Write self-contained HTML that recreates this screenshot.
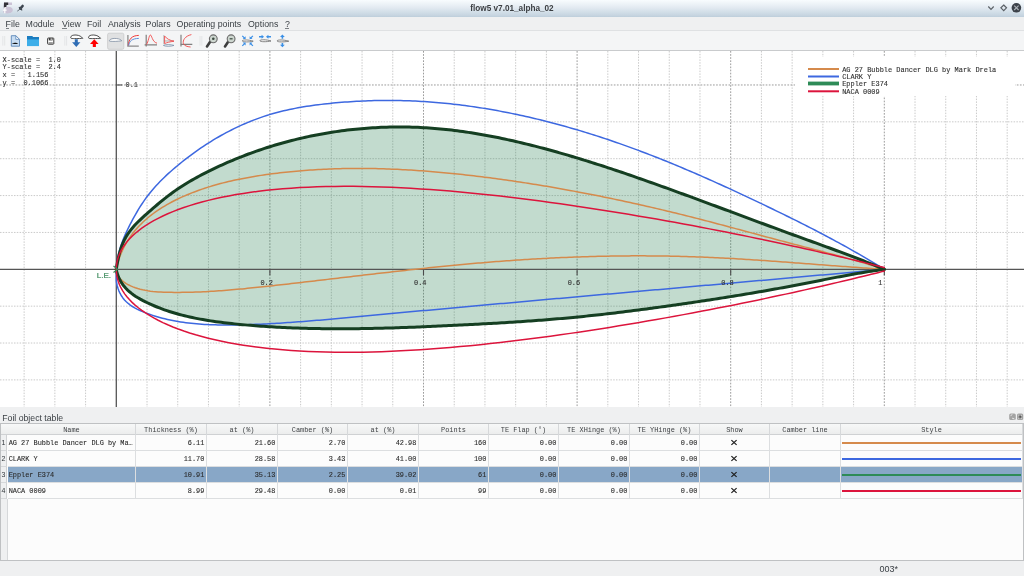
<!DOCTYPE html>
<html><head><meta charset="utf-8">
<style>
html,body{margin:0;padding:0;width:1024px;height:576px;overflow:hidden;background:#eff0f1;font-family:"Liberation Sans",sans-serif;}
.abs{position:absolute;}
#title{position:absolute;left:0;top:0;width:1024px;height:16.9px;z-index:1;background:linear-gradient(#f8fcfe 0%,#e4ebf2 42%,#d4e0e9 68%,#c7d5e1 90%,#bdcedb 100%);}
#title .t{position:absolute;left:0;width:1024px;top:3.8px;text-align:center;font:bold 8.2px "Liberation Sans",sans-serif;color:#3b3e42;letter-spacing:0;}
#menu{position:absolute;left:0;top:16px;width:1024px;height:14px;background:#eff0f1;}
#menu span{position:absolute;top:2.7px;font-size:8.8px;color:#3b4045;}
#tool{position:absolute;left:0;top:30px;width:1024px;height:20px;background:#f4f5f6;border-top:1px solid #dfe1e3;box-sizing:border-box;}
#plot{position:absolute;left:0;top:50px;width:1024px;height:357px;background:#fff;border-top:1px solid #c9cbcd;box-sizing:border-box;}
svg text.m{font-family:"Liberation Mono",monospace;font-size:6.95px;fill:#333;stroke:#333;stroke-width:0.12px;}
svg text.le{font-family:"Liberation Sans",sans-serif;font-size:8px;fill:#3f8c5e;stroke:#3f8c5e;stroke-width:0.2px;}
#dock{position:absolute;left:0;top:407px;overflow:visible;width:1024px;height:154px;background:#eff0f1;}
#dock .dt{position:absolute;left:2.3px;top:5.6px;font-size:8.7px;color:#3b4045;}
.tbl{position:absolute;left:0;top:423px;width:1024px;height:138px;background:#fcfcfc;border:1px solid #bfc1c3;box-sizing:border-box;overflow:hidden;}
.hdr{position:absolute;left:0;top:0;width:1024px;height:10px;background:linear-gradient(#f7f8f8,#eceded);border-bottom:1px solid #cfd1d3;}
.hc{position:absolute;top:0;height:11px;line-height:12.2px;text-align:center;font-family:"Liberation Mono",monospace;font-size:6.9px;color:#3c3f42;border-right:1px solid #d6d8da;box-sizing:border-box;}
.vh{position:absolute;left:0;width:6px;height:16px;line-height:16px;font-size:7px;text-align:center;color:#31363b;background:#eff0f1;border-right:1px solid #d0d2d4;border-bottom:1px solid #d6d8da;box-sizing:border-box;}
.vbody{position:absolute;left:0;top:75px;width:6.5px;height:70px;background:#eff0f1;border-right:1px solid #d6d8da;box-sizing:border-box;}
.row{position:absolute;left:6.5px;width:1017px;height:16px;}
.row.sel{background:#88a7c7;}
.c{position:absolute;top:0;height:16px;line-height:17.8px;font-family:"Liberation Mono",monospace;font-size:6.9px;color:#2a2a2a;-webkit-text-stroke:0.1px #2a2a2a;border-right:1px solid #dcdee0;border-bottom:1px solid #dcdee0;box-sizing:border-box;white-space:pre;overflow:hidden;}
.c.l{padding-left:1.2px;}
.c.r{text-align:right;padding-right:1.2px;}
.c.x{text-align:center;font-family:"Liberation Sans",sans-serif;font-size:8px;color:#111;}
.sl{position:absolute;left:1px;right:1px;top:7px;height:2px;}
#status{position:absolute;left:0;top:561px;width:1024px;height:15px;background:#eff0f1;}
#status span{position:absolute;left:879.5px;top:3.2px;font-size:9px;color:#3b4045;}
</style></head><body><div id="wrap" style="position:absolute;left:0;top:0;width:1024px;height:576px;will-change:transform">
<div id="title"><div class="t">flow5 v7.01_alpha_02</div></div>
<div id="menu">
<span style="left:5.6px">File</span>
<span style="left:25.6px">Module</span>
<span style="left:62px">View</span>
<span style="left:87px">Foil</span>
<span style="left:108px">Analysis</span>
<span style="left:145.6px">Polars</span>
<span style="left:176.6px">Operating points</span>
<span style="left:248px">Options</span>
<span style="left:285px">?</span>
<i style="position:absolute;left:5.8px;top:12.2px;width:3px;height:0.8px;background:#7a7e82"></i><i style="position:absolute;left:62.2px;top:12.2px;width:4.5px;height:0.8px;background:#7a7e82"></i><i style="position:absolute;left:284.8px;top:12.2px;width:4.4px;height:0.8px;background:#7a7e82"></i>
</div>
<div id="tool"></div>
<div id="plot"></div>
<svg class="abs" style="left:0;top:0;z-index:2" width="1024" height="50" viewBox="0 0 1024 50">
<!-- title logo -->
<path d="M4,2.6 H12 V4.9 H6.6 L6.3,6.9 C10.6,6.2 12.8,8 12.8,10.1 C12.8,12.5 10.4,13.4 7.6,13.4 C6,13.4 4.4,13.1 3.2,12.5 L3.7,7.2 Z" fill="#cbc3d6"/>
<path d="M4,2.6 H8.2 V4.9 H6.6 L6.3,6.9 L3.8,7.4 Z" fill="#333238"/>
<path d="M4.2,8 C4.2,7.2 5.2,7 6.2,7.2 V8.2 C5.6,8.1 5.4,8.3 5.4,8.8 V13.2 H4.2 Z M2.8,9.6 H6.6 V10.7 H2.8 Z" fill="#ffffff"/>
<!-- pin -->
<path d="M20.3,8.6 L22.6,6" stroke="#3d4650" stroke-width="2.6" stroke-linecap="round"/>
<path d="M19.2,7.4 L21.8,10" stroke="#3d4650" stroke-width="1.1" stroke-linecap="round"/>
<path d="M20.2,9 L17.6,10.9" stroke="#5a636c" stroke-width="0.9" stroke-linecap="round"/>
<!-- window buttons -->
<path d="M988.3,6.5 L991,9.3 L993.7,6.5" fill="none" stroke="#5b6167" stroke-width="1.2"/>
<path d="M1003.7,5 L1006.5,7.8 L1003.7,10.6 L1000.9,7.8 Z" fill="none" stroke="#5b6167" stroke-width="1.2"/>
<circle cx="1016.4" cy="7.8" r="4.8" fill="#3c424a"/>
<path d="M1014.2,5.6 L1018.6,10 M1018.6,5.6 L1014.2,10" stroke="#aeb4ba" stroke-width="1.1"/>
<!-- grips -->
<g fill="#e2e3e4">
<rect x="2.4" y="36" width="0.9" height="9.6"/><rect x="4.3" y="36" width="0.9" height="9.6"/>
<rect x="64.4" y="36" width="0.9" height="9.6"/><rect x="66.2" y="36" width="0.9" height="9.6"/>
<rect x="199.6" y="36" width="0.9" height="9.6"/><rect x="201.4" y="36" width="0.9" height="9.6"/>
</g>
<!-- new doc -->
<path d="M11.3,35.7 H15.8 L19.5,39.4 V46.2 H11.3 Z" fill="#c8ddf2" stroke="#5b87b9" stroke-width="0.9"/>
<path d="M15.8,35.7 V39.4 H19.5 Z" fill="#fff" stroke="#5b87b9" stroke-width="0.8"/>
<path d="M11.8,43.6 C13.5,42.2 16.8,42.6 18.3,43.4 C16.6,44.1 13.5,44.4 11.8,43.6Z" fill="#111"/>
<!-- folder -->
<path d="M27,35.9 H32.2 L33.2,36.9 H39 V40 H27 Z" fill="#1b7cc0"/>
<rect x="27" y="39.4" width="12" height="6.7" fill="#3daee9"/>
<!-- save -->
<rect x="47.6" y="38" width="6.2" height="6.2" rx="0.7" fill="#fff" stroke="#3a3a3a" stroke-width="1"/>
<rect x="48.8" y="38" width="3.8" height="2.4" fill="#3a3a3a"/>
<rect x="50.6" y="38.4" width="1.1" height="1.5" fill="#fff"/>
<rect x="48.6" y="42.2" width="4.2" height="1.6" fill="#8a8a8a"/>
<!-- load foil down -->
<path d="M70.7,37.6 C70.7,35.6 73,34.9 76,35 C79.5,35.2 81.5,36.8 82.8,38.3 C79,38.6 73,38.7 71.3,38.4 C70.8,38.2 70.7,37.9 70.7,37.6 Z" fill="#fff" stroke="#3a3a3a" stroke-width="0.9"/>
<path d="M74.8,39.2 H77.8 V42.3 H80.4 L76.3,47.1 L72.1,42.3 H74.8 Z" fill="#2f6db5"/>
<!-- foil up -->
<path d="M88.5,37.6 C88.5,35.6 90.8,34.9 93.8,35 C97.3,35.2 99.3,36.8 100.6,38.3 C96.8,38.6 90.8,38.7 89.1,38.4 C88.6,38.2 88.5,37.9 88.5,37.6 Z" fill="#fff" stroke="#3a3a3a" stroke-width="0.9"/>
<path d="M94.3,39.2 L98.6,44 H95.9 V47.1 H92.8 V44 H90 Z" fill="#ff0000"/>
<!-- active -->
<rect x="107.6" y="33.2" width="16.2" height="16.1" rx="1.5" fill="#e0e1e2" stroke="#c9cacb" stroke-width="0.8"/>
<path d="M109.4,40.6 C109.8,38.8 113.5,38.2 116.5,38.5 C119,38.8 121,39.6 121.8,40.8 C118,41.4 112.5,41.7 109.6,41.2 Z" fill="#fafafa" stroke="#71839a" stroke-width="0.7"/>
<!-- polar 1 -->
<path d="M127.9,34.9 V46.2 H138.8" fill="none" stroke="#8a8a8a" stroke-width="1.3"/>
<path d="M128.3,45.6 C129,39 131.5,35.6 138.8,35.4" fill="none" stroke="#f03a3a" stroke-width="1"/>
<path d="M128.6,45.6 C129.6,40.8 132,38.6 138.8,38.4" fill="none" stroke="#5e8fd8" stroke-width="1"/>
<!-- polar 2 -->
<path d="M146.2,34.8 V46.6 M144.6,44.8 H157" fill="none" stroke="#808080" stroke-width="1.2"/>
<path d="M146.4,44.6 C148.4,42 149,35 150.4,35 C151.8,35 152.2,42 157,43.2" fill="none" stroke="#f04848" stroke-width="0.9"/>
<!-- polar 3 -->
<path d="M163.9,35 V44" fill="none" stroke="#b0b0b0" stroke-width="1"/>
<rect x="163" y="40.2" width="11" height="1.5" fill="#c8c8c8"/>
<path d="M164.6,36 C166.4,38.6 170,40.6 174,41.2 C170,41.8 166.5,42.6 164.6,43.6 Z" fill="none" stroke="#f05050" stroke-width="0.9"/>
<path d="M163.4,45.4 C165,44.2 171,44.4 174,45.4 C171,46.6 165,46.6 163.4,45.4Z" fill="none" stroke="#7a90aa" stroke-width="0.8"/>
<!-- polar 4 -->
<path d="M181,34.8 V46.6 M180.3,44.4 H192.3" fill="none" stroke="#808080" stroke-width="1.2"/>
<path d="M191.4,34.6 C185,36 182.5,40.5 183.4,43.5 C184.2,45.6 187,46.8 190.6,47" fill="none" stroke="#f04848" stroke-width="0.9"/>
<!-- zoom in -->
<path d="M210,42 L207,46.4" stroke="#3e3e3e" stroke-width="2.6" stroke-linecap="round"/>
<circle cx="213.3" cy="38.8" r="3.9" fill="#cdd6cf" stroke="#6a6a6a" stroke-width="1.1"/>
<circle cx="213.3" cy="38.8" r="1.3" fill="#3a4a40"/>
<!-- zoom out -->
<path d="M228,42 L225,46.4" stroke="#3e3e3e" stroke-width="2.6" stroke-linecap="round"/>
<circle cx="231.1" cy="38.8" r="3.9" fill="#cdd6cf" stroke="#6a6a6a" stroke-width="1.1"/>
<rect x="229.6" y="38.2" width="3" height="1.2" fill="#3a4a40"/>
<!-- fit -->
<path d="M242.2,40.9 C242.4,39.6 249,39.6 253.2,41.2 C249,42.2 242.8,42.2 242.2,40.9Z" fill="#fafafa" stroke="#6a6a6a" stroke-width="0.8"/>
<g stroke="#3a8fe6" stroke-width="1.2" fill="none"><path d="M242.3,35.8 L244.6,38.1"/><path d="M252.9,35.8 L250.6,38.1"/><path d="M242.3,45.9 L244.6,43.6"/><path d="M252.9,45.9 L250.6,43.6"/></g>
<g fill="#3a8fe6"><path d="M245.6,39.1 L245.6,36.2 L242.7,39.1Z"/><path d="M249.6,39.1 L249.6,36.2 L252.5,39.1Z"/><path d="M245.6,42.6 L245.6,45.5 L242.7,42.6Z"/><path d="M249.6,42.6 L249.6,45.5 L252.5,42.6Z"/></g>
<!-- x zoom -->
<path d="M259.8,40.7 C260,39.4 266.6,39.4 271,41 C266.6,42 260.4,42 259.8,40.7Z" fill="#fafafa" stroke="#6a6a6a" stroke-width="0.8"/>
<g fill="#3a8fe6"><path d="M259,36.1 H261.6 V34.8 L264,36.8 L261.6,38.8 V37.5 H259Z"/><path d="M271,36.1 H268.4 V34.8 L266,36.8 L268.4,38.8 V37.5 H271Z"/></g>
<!-- y zoom -->
<path d="M277,40.9 C277.2,39.6 283.8,39.6 288.8,41.2 C283.8,42.2 277.6,42.2 277,40.9Z" fill="#fafafa" stroke="#6a6a6a" stroke-width="0.8"/>
<g fill="#3a8fe6"><path d="M282.4,34.6 L284.8,37 H283.2 V38.8 H281.6 V37 H280Z"/><path d="M282.4,47.2 L284.8,44.8 H283.2 V43 H281.6 V44.8 H280Z"/></g>
</svg>

<svg class="abs" style="left:0;top:0" width="1024" height="576" viewBox="0 0 1024 576">
<defs><clipPath id="pc"><rect x="0" y="51" width="1024" height="356"/></clipPath></defs>
<g clip-path="url(#pc)">
<line x1="24.14" y1="51" x2="24.14" y2="407" stroke="#cacaca" stroke-width="1" stroke-dasharray="1.5,1.3"/>
<line x1="54.86" y1="51" x2="54.86" y2="407" stroke="#cacaca" stroke-width="1" stroke-dasharray="1.5,1.3"/>
<line x1="85.58" y1="51" x2="85.58" y2="407" stroke="#cacaca" stroke-width="1" stroke-dasharray="1.5,1.3"/>
<line x1="147.02" y1="51" x2="147.02" y2="407" stroke="#cacaca" stroke-width="1" stroke-dasharray="1.5,1.3"/>
<line x1="177.74" y1="51" x2="177.74" y2="407" stroke="#cacaca" stroke-width="1" stroke-dasharray="1.5,1.3"/>
<line x1="208.46" y1="51" x2="208.46" y2="407" stroke="#cacaca" stroke-width="1" stroke-dasharray="1.5,1.3"/>
<line x1="239.18" y1="51" x2="239.18" y2="407" stroke="#cacaca" stroke-width="1" stroke-dasharray="1.5,1.3"/>
<line x1="269.90" y1="51" x2="269.90" y2="407" stroke="#9c9c9c" stroke-width="1" stroke-dasharray="1.7,1.4"/>
<line x1="300.62" y1="51" x2="300.62" y2="407" stroke="#cacaca" stroke-width="1" stroke-dasharray="1.5,1.3"/>
<line x1="331.34" y1="51" x2="331.34" y2="407" stroke="#cacaca" stroke-width="1" stroke-dasharray="1.5,1.3"/>
<line x1="362.06" y1="51" x2="362.06" y2="407" stroke="#cacaca" stroke-width="1" stroke-dasharray="1.5,1.3"/>
<line x1="392.78" y1="51" x2="392.78" y2="407" stroke="#cacaca" stroke-width="1" stroke-dasharray="1.5,1.3"/>
<line x1="423.50" y1="51" x2="423.50" y2="407" stroke="#9c9c9c" stroke-width="1" stroke-dasharray="1.7,1.4"/>
<line x1="454.22" y1="51" x2="454.22" y2="407" stroke="#cacaca" stroke-width="1" stroke-dasharray="1.5,1.3"/>
<line x1="484.94" y1="51" x2="484.94" y2="407" stroke="#cacaca" stroke-width="1" stroke-dasharray="1.5,1.3"/>
<line x1="515.66" y1="51" x2="515.66" y2="407" stroke="#cacaca" stroke-width="1" stroke-dasharray="1.5,1.3"/>
<line x1="546.38" y1="51" x2="546.38" y2="407" stroke="#cacaca" stroke-width="1" stroke-dasharray="1.5,1.3"/>
<line x1="577.10" y1="51" x2="577.10" y2="407" stroke="#9c9c9c" stroke-width="1" stroke-dasharray="1.7,1.4"/>
<line x1="607.82" y1="51" x2="607.82" y2="407" stroke="#cacaca" stroke-width="1" stroke-dasharray="1.5,1.3"/>
<line x1="638.54" y1="51" x2="638.54" y2="407" stroke="#cacaca" stroke-width="1" stroke-dasharray="1.5,1.3"/>
<line x1="669.26" y1="51" x2="669.26" y2="407" stroke="#cacaca" stroke-width="1" stroke-dasharray="1.5,1.3"/>
<line x1="699.98" y1="51" x2="699.98" y2="407" stroke="#cacaca" stroke-width="1" stroke-dasharray="1.5,1.3"/>
<line x1="730.70" y1="51" x2="730.70" y2="407" stroke="#9c9c9c" stroke-width="1" stroke-dasharray="1.7,1.4"/>
<line x1="761.42" y1="51" x2="761.42" y2="407" stroke="#cacaca" stroke-width="1" stroke-dasharray="1.5,1.3"/>
<line x1="792.14" y1="51" x2="792.14" y2="407" stroke="#cacaca" stroke-width="1" stroke-dasharray="1.5,1.3"/>
<line x1="822.86" y1="51" x2="822.86" y2="407" stroke="#cacaca" stroke-width="1" stroke-dasharray="1.5,1.3"/>
<line x1="853.58" y1="51" x2="853.58" y2="407" stroke="#cacaca" stroke-width="1" stroke-dasharray="1.5,1.3"/>
<line x1="884.30" y1="51" x2="884.30" y2="407" stroke="#9c9c9c" stroke-width="1" stroke-dasharray="1.7,1.4"/>
<line x1="915.02" y1="51" x2="915.02" y2="407" stroke="#cacaca" stroke-width="1" stroke-dasharray="1.5,1.3"/>
<line x1="945.74" y1="51" x2="945.74" y2="407" stroke="#cacaca" stroke-width="1" stroke-dasharray="1.5,1.3"/>
<line x1="976.46" y1="51" x2="976.46" y2="407" stroke="#cacaca" stroke-width="1" stroke-dasharray="1.5,1.3"/>
<line x1="1007.18" y1="51" x2="1007.18" y2="407" stroke="#cacaca" stroke-width="1" stroke-dasharray="1.5,1.3"/>
<line x1="0" y1="379.89" x2="1024" y2="379.89" stroke="#cacaca" stroke-width="1" stroke-dasharray="1.5,1.3"/>
<line x1="0" y1="343.03" x2="1024" y2="343.03" stroke="#cacaca" stroke-width="1" stroke-dasharray="1.5,1.3"/>
<line x1="0" y1="306.16" x2="1024" y2="306.16" stroke="#cacaca" stroke-width="1" stroke-dasharray="1.5,1.3"/>
<line x1="0" y1="232.44" x2="1024" y2="232.44" stroke="#cacaca" stroke-width="1" stroke-dasharray="1.5,1.3"/>
<line x1="0" y1="195.57" x2="1024" y2="195.57" stroke="#cacaca" stroke-width="1" stroke-dasharray="1.5,1.3"/>
<line x1="0" y1="158.71" x2="1024" y2="158.71" stroke="#cacaca" stroke-width="1" stroke-dasharray="1.5,1.3"/>
<line x1="0" y1="121.84" x2="1024" y2="121.84" stroke="#cacaca" stroke-width="1" stroke-dasharray="1.5,1.3"/>
<line x1="0" y1="84.98" x2="1024" y2="84.98" stroke="#9c9c9c" stroke-width="1" stroke-dasharray="1.7,1.4"/>
<path d="M116.30,269.30 L116.73,266.50 L117.21,263.68 L117.74,260.86 L118.33,258.04 L118.98,255.23 L119.71,252.45 L120.52,249.70 L121.42,246.99 L122.41,244.33 L123.52,241.73 L124.74,239.20 L126.08,236.75 L127.54,234.37 L129.12,232.08 L130.81,229.85 L132.59,227.69 L134.45,225.59 L136.38,223.53 L138.38,221.52 L140.42,219.55 L142.50,217.61 L144.61,215.69 L146.73,213.79 L148.87,211.91 L151.00,210.03 L153.15,208.17 L155.30,206.32 L157.46,204.49 L159.64,202.68 L161.82,200.88 L164.02,199.11 L166.24,197.37 L168.47,195.65 L170.73,193.95 L173.00,192.29 L175.29,190.65 L177.61,189.05 L179.95,187.48 L182.31,185.94 L184.69,184.44 L187.10,182.96 L189.53,181.52 L191.97,180.10 L194.43,178.70 L196.91,177.34 L199.40,175.99 L201.91,174.67 L204.42,173.37 L206.95,172.09 L209.48,170.83 L212.03,169.59 L214.58,168.36 L217.14,167.15 L219.71,165.96 L222.29,164.79 L224.87,163.63 L227.47,162.49 L230.07,161.37 L232.67,160.27 L235.29,159.18 L237.91,158.12 L240.54,157.07 L243.17,156.04 L245.82,155.02 L248.47,154.03 L251.12,153.05 L253.78,152.09 L256.45,151.14 L259.13,150.22 L261.81,149.31 L264.50,148.42 L267.19,147.55 L269.89,146.70 L272.59,145.86 L275.30,145.05 L278.02,144.25 L280.74,143.46 L283.46,142.70 L286.19,141.96 L288.93,141.23 L291.66,140.52 L294.41,139.83 L297.16,139.15 L299.91,138.50 L302.67,137.86 L305.43,137.24 L308.19,136.64 L310.96,136.05 L313.74,135.49 L316.51,134.94 L319.29,134.41 L322.08,133.90 L324.86,133.41 L327.65,132.93 L330.44,132.47 L333.24,132.03 L336.04,131.61 L338.84,131.21 L341.64,130.83 L344.45,130.46 L347.26,130.11 L350.07,129.78 L352.88,129.47 L355.69,129.18 L358.51,128.90 L361.33,128.65 L364.14,128.41 L366.97,128.19 L369.79,127.99 L372.61,127.80 L375.43,127.64 L378.26,127.49 L381.08,127.36 L383.91,127.25 L386.74,127.16 L389.56,127.09 L392.39,127.03 L395.22,126.99 L398.05,126.98 L400.87,126.98 L403.70,127.00 L406.53,127.03 L409.35,127.09 L412.18,127.16 L415.00,127.25 L417.83,127.36 L420.65,127.49 L423.47,127.64 L426.29,127.81 L429.11,127.99 L431.93,128.20 L434.75,128.42 L437.57,128.65 L440.38,128.91 L443.19,129.18 L446.01,129.47 L448.82,129.78 L451.62,130.10 L454.43,130.44 L457.24,130.79 L460.04,131.16 L462.84,131.55 L465.64,131.95 L468.44,132.36 L471.24,132.79 L474.03,133.24 L476.83,133.69 L479.62,134.17 L482.41,134.65 L485.20,135.15 L487.98,135.66 L490.77,136.19 L493.55,136.73 L496.33,137.28 L499.10,137.84 L501.88,138.42 L504.65,139.00 L507.42,139.60 L510.19,140.21 L512.96,140.83 L515.72,141.46 L518.48,142.10 L521.24,142.75 L524.00,143.42 L526.75,144.09 L529.50,144.77 L532.25,145.46 L535.00,146.16 L537.74,146.87 L540.48,147.58 L543.22,148.31 L545.96,149.04 L548.69,149.78 L551.42,150.53 L554.15,151.29 L556.87,152.05 L559.60,152.82 L562.32,153.60 L565.03,154.39 L567.75,155.18 L570.46,155.98 L573.17,156.78 L575.88,157.60 L578.58,158.42 L581.29,159.24 L583.99,160.07 L586.69,160.91 L589.39,161.75 L592.08,162.60 L594.77,163.46 L597.47,164.32 L600.16,165.18 L602.84,166.05 L605.53,166.93 L608.21,167.81 L610.90,168.69 L613.58,169.59 L616.26,170.48 L618.94,171.38 L621.61,172.29 L624.29,173.19 L626.96,174.11 L629.63,175.02 L632.31,175.94 L634.98,176.87 L637.65,177.80 L640.31,178.73 L642.98,179.66 L645.65,180.60 L648.31,181.54 L650.98,182.49 L653.64,183.44 L656.30,184.39 L658.96,185.34 L661.63,186.29 L664.29,187.25 L666.95,188.21 L669.61,189.17 L672.27,190.14 L674.92,191.10 L677.58,192.07 L680.24,193.04 L682.90,194.01 L685.55,194.99 L688.21,195.96 L690.87,196.94 L693.52,197.91 L696.18,198.89 L698.83,199.87 L701.49,200.85 L704.14,201.83 L706.80,202.82 L709.45,203.80 L712.11,204.79 L714.76,205.77 L717.41,206.76 L720.07,207.74 L722.72,208.73 L725.38,209.72 L728.03,210.70 L730.68,211.69 L733.34,212.68 L735.99,213.67 L738.64,214.65 L741.30,215.64 L743.95,216.63 L746.60,217.62 L749.26,218.60 L751.91,219.59 L754.56,220.57 L757.22,221.56 L759.87,222.54 L762.52,223.53 L765.18,224.51 L767.83,225.49 L770.49,226.47 L773.14,227.45 L775.80,228.43 L778.45,229.41 L781.11,230.38 L783.77,231.35 L786.42,232.33 L789.08,233.30 L791.74,234.27 L794.39,235.23 L797.05,236.20 L799.71,237.16 L802.37,238.13 L805.03,239.09 L807.69,240.05 L810.34,241.02 L813.00,241.98 L815.66,242.94 L818.32,243.91 L820.97,244.87 L823.63,245.84 L826.29,246.81 L828.94,247.78 L831.59,248.76 L834.24,249.73 L836.90,250.72 L839.55,251.70 L842.19,252.69 L844.84,253.68 L847.49,254.68 L850.13,255.68 L852.77,256.69 L855.41,257.70 L858.05,258.72 L860.69,259.74 L863.32,260.77 L865.95,261.81 L868.58,262.86 L871.21,263.91 L873.83,264.97 L876.45,266.04 L879.07,267.12 L881.69,268.20 L884.30,269.30 L884.30,269.30 L881.67,269.66 L879.05,270.04 L876.42,270.42 L873.80,270.82 L871.18,271.22 L868.56,271.63 L865.95,272.06 L863.34,272.49 L860.72,272.92 L858.11,273.37 L855.50,273.82 L852.90,274.28 L850.29,274.75 L847.69,275.22 L845.08,275.69 L842.48,276.18 L839.88,276.66 L837.28,277.15 L834.68,277.65 L832.08,278.14 L829.48,278.64 L826.89,279.14 L824.29,279.65 L821.69,280.16 L819.09,280.66 L816.50,281.17 L813.90,281.68 L811.30,282.19 L808.71,282.69 L806.11,283.20 L803.51,283.71 L800.91,284.21 L798.32,284.71 L795.72,285.21 L793.12,285.71 L790.52,286.20 L787.91,286.69 L785.31,287.18 L782.71,287.66 L780.10,288.14 L777.50,288.61 L774.89,289.08 L772.29,289.55 L769.68,290.02 L767.07,290.48 L764.46,290.94 L761.85,291.40 L759.24,291.85 L756.63,292.30 L754.02,292.75 L751.41,293.19 L748.79,293.63 L746.18,294.07 L743.57,294.50 L740.95,294.93 L738.34,295.36 L735.72,295.79 L733.11,296.21 L730.49,296.64 L727.87,297.05 L725.26,297.47 L722.64,297.88 L720.02,298.29 L717.40,298.70 L714.78,299.11 L712.17,299.51 L709.55,299.91 L706.93,300.31 L704.31,300.70 L701.69,301.10 L699.07,301.49 L696.45,301.88 L693.83,302.27 L691.21,302.65 L688.58,303.03 L685.96,303.41 L683.34,303.79 L680.72,304.17 L678.10,304.55 L675.48,304.92 L672.86,305.29 L670.23,305.66 L667.61,306.03 L664.99,306.39 L662.37,306.76 L659.75,307.12 L657.13,307.48 L654.50,307.83 L651.88,308.19 L649.26,308.54 L646.64,308.89 L644.02,309.24 L641.39,309.59 L638.77,309.93 L636.15,310.27 L633.52,310.61 L630.90,310.94 L628.28,311.27 L625.65,311.60 L623.03,311.93 L620.40,312.25 L617.78,312.57 L615.15,312.89 L612.53,313.20 L609.90,313.51 L607.27,313.81 L604.64,314.12 L602.02,314.41 L599.39,314.71 L596.76,315.00 L594.13,315.29 L591.50,315.57 L588.87,315.85 L586.23,316.12 L583.60,316.39 L580.97,316.66 L578.33,316.92 L575.70,317.17 L573.06,317.43 L570.43,317.67 L567.79,317.92 L565.15,318.16 L562.51,318.39 L559.88,318.62 L557.24,318.85 L554.60,319.07 L551.95,319.29 L549.31,319.51 L546.67,319.72 L544.03,319.92 L541.39,320.13 L538.74,320.33 L536.10,320.53 L533.46,320.72 L530.81,320.91 L528.17,321.10 L525.52,321.28 L522.88,321.46 L520.23,321.64 L517.58,321.82 L514.94,321.99 L512.29,322.16 L509.64,322.33 L507.00,322.49 L504.35,322.65 L501.70,322.81 L499.06,322.97 L496.41,323.13 L493.76,323.28 L491.11,323.43 L488.46,323.58 L485.82,323.72 L483.17,323.87 L480.52,324.01 L477.87,324.15 L475.23,324.29 L472.58,324.43 L469.93,324.57 L467.28,324.70 L464.64,324.84 L461.99,324.97 L459.34,325.10 L456.70,325.23 L454.05,325.36 L451.41,325.49 L448.76,325.62 L446.12,325.74 L443.47,325.87 L440.83,325.99 L438.18,326.11 L435.54,326.23 L432.89,326.35 L430.25,326.47 L427.61,326.58 L424.96,326.70 L422.32,326.81 L419.68,326.92 L417.03,327.03 L414.39,327.13 L411.75,327.23 L409.10,327.33 L406.46,327.43 L403.82,327.53 L401.18,327.62 L398.53,327.71 L395.89,327.79 L393.25,327.88 L390.61,327.96 L387.97,328.03 L385.32,328.11 L382.68,328.18 L380.04,328.25 L377.40,328.31 L374.76,328.37 L372.12,328.43 L369.47,328.48 L366.83,328.53 L364.19,328.57 L361.55,328.61 L358.91,328.65 L356.26,328.68 L353.62,328.70 L350.98,328.73 L348.34,328.75 L345.69,328.76 L343.05,328.77 L340.41,328.77 L337.77,328.77 L335.12,328.76 L332.48,328.75 L329.84,328.74 L327.19,328.71 L324.55,328.69 L321.90,328.65 L319.26,328.62 L316.62,328.57 L313.97,328.52 L311.33,328.47 L308.68,328.40 L306.04,328.34 L303.39,328.26 L300.75,328.18 L298.10,328.09 L295.45,328.00 L292.81,327.90 L290.16,327.79 L287.51,327.68 L284.86,327.56 L282.22,327.44 L279.57,327.30 L276.92,327.16 L274.27,327.01 L271.62,326.86 L268.97,326.69 L266.32,326.52 L263.67,326.35 L261.02,326.16 L258.37,325.97 L255.72,325.77 L253.06,325.56 L250.41,325.34 L247.76,325.12 L245.10,324.88 L242.45,324.64 L239.79,324.39 L237.14,324.13 L234.48,323.87 L231.83,323.59 L229.17,323.30 L226.52,323.00 L223.87,322.68 L221.22,322.35 L218.58,322.01 L215.93,321.65 L213.29,321.27 L210.66,320.88 L208.03,320.47 L205.40,320.04 L202.78,319.59 L200.16,319.12 L197.55,318.62 L194.95,318.10 L192.35,317.56 L189.77,317.00 L187.18,316.41 L184.61,315.79 L182.05,315.15 L179.49,314.47 L176.95,313.77 L174.42,313.04 L171.89,312.28 L169.38,311.48 L166.88,310.66 L164.39,309.79 L161.91,308.90 L159.44,307.97 L156.99,307.00 L154.56,306.00 L152.13,304.96 L149.72,303.87 L147.33,302.75 L144.95,301.59 L142.59,300.38 L140.27,299.12 L137.99,297.80 L135.77,296.41 L133.61,294.95 L131.52,293.41 L129.52,291.79 L127.61,290.07 L125.80,288.25 L124.11,286.32 L122.54,284.28 L121.11,282.13 L119.82,279.84 L118.68,277.42 L117.71,274.86 L116.91,272.16 L116.30,269.30 Z" fill="rgb(40,128,80)" fill-opacity="0.284" stroke="none"/>
<line x1="0" y1="269.30" x2="1024" y2="269.30" stroke="#555" stroke-width="1.3"/>
<line x1="116.30" y1="51" x2="116.30" y2="407" stroke="#555" stroke-width="1.3"/>
<line x1="269.90" y1="269.30" x2="269.90" y2="275.30" stroke="#4a4a4a" stroke-width="1.1"/>
<line x1="423.50" y1="269.30" x2="423.50" y2="275.30" stroke="#4a4a4a" stroke-width="1.1"/>
<line x1="577.10" y1="269.30" x2="577.10" y2="275.30" stroke="#4a4a4a" stroke-width="1.1"/>
<line x1="730.70" y1="269.30" x2="730.70" y2="275.30" stroke="#4a4a4a" stroke-width="1.1"/>
<line x1="884.30" y1="269.30" x2="884.30" y2="275.30" stroke="#4a4a4a" stroke-width="1.1"/>
<line x1="116.30" y1="84.98" x2="122.30" y2="84.98" stroke="#4a4a4a" stroke-width="1.1"/>
<text x="125.5" y="87.48" class="m">0.1</text>
<path d="M116.30,269.30 L116.95,266.38 L117.69,263.53 L118.50,260.74 L119.40,258.01 L120.37,255.34 L121.42,252.74 L122.55,250.19 L123.74,247.70 L125.01,245.26 L126.34,242.89 L127.75,240.57 L129.21,238.30 L130.74,236.09 L132.33,233.93 L133.98,231.83 L135.69,229.77 L137.45,227.77 L139.27,225.82 L141.14,223.92 L143.06,222.06 L145.02,220.26 L147.04,218.50 L149.10,216.78 L151.20,215.12 L153.35,213.49 L155.53,211.91 L157.75,210.38 L160.01,208.88 L162.30,207.43 L164.62,206.02 L166.97,204.64 L169.36,203.31 L171.76,202.01 L174.20,200.75 L176.66,199.53 L179.13,198.34 L181.63,197.19 L184.15,196.07 L186.68,194.99 L189.22,193.94 L191.78,192.92 L194.35,191.93 L196.92,190.97 L199.51,190.03 L202.11,189.13 L204.72,188.26 L207.33,187.41 L209.95,186.60 L212.59,185.80 L215.22,185.04 L217.87,184.30 L220.52,183.58 L223.18,182.89 L225.85,182.22 L228.52,181.58 L231.20,180.95 L233.89,180.35 L236.58,179.77 L239.27,179.21 L241.97,178.67 L244.67,178.15 L247.37,177.64 L250.08,177.16 L252.80,176.69 L255.51,176.24 L258.23,175.80 L260.95,175.38 L263.67,174.98 L266.39,174.59 L269.11,174.21 L271.84,173.85 L274.56,173.50 L277.28,173.16 L280.01,172.84 L282.73,172.52 L285.46,172.22 L288.19,171.93 L290.91,171.66 L293.64,171.39 L296.37,171.14 L299.09,170.90 L301.82,170.67 L304.55,170.46 L307.28,170.25 L310.01,170.06 L312.74,169.88 L315.47,169.71 L318.20,169.55 L320.93,169.40 L323.66,169.26 L326.39,169.13 L329.12,169.02 L331.85,168.91 L334.58,168.82 L337.31,168.74 L340.04,168.66 L342.77,168.60 L345.51,168.55 L348.24,168.51 L350.97,168.47 L353.70,168.45 L356.43,168.44 L359.17,168.44 L361.90,168.44 L364.63,168.46 L367.36,168.48 L370.09,168.52 L372.82,168.56 L375.56,168.62 L378.29,168.68 L381.02,168.75 L383.75,168.83 L386.48,168.92 L389.21,169.02 L391.95,169.13 L394.68,169.24 L397.41,169.37 L400.14,169.50 L402.87,169.64 L405.60,169.79 L408.33,169.94 L411.06,170.10 L413.79,170.28 L416.52,170.46 L419.24,170.64 L421.97,170.84 L424.70,171.04 L427.43,171.25 L430.16,171.47 L432.88,171.69 L435.61,171.92 L438.34,172.16 L441.06,172.40 L443.79,172.65 L446.51,172.91 L449.24,173.17 L451.96,173.44 L454.69,173.72 L457.41,174.01 L460.13,174.29 L462.85,174.59 L465.58,174.89 L468.30,175.20 L471.02,175.51 L473.74,175.83 L476.46,176.15 L479.17,176.48 L481.89,176.82 L484.61,177.16 L487.33,177.50 L490.04,177.85 L492.76,178.21 L495.47,178.57 L498.19,178.94 L500.90,179.31 L503.61,179.68 L506.32,180.06 L509.03,180.45 L511.74,180.84 L514.45,181.24 L517.16,181.64 L519.87,182.04 L522.58,182.45 L525.29,182.87 L527.99,183.29 L530.70,183.71 L533.40,184.14 L536.11,184.57 L538.81,185.01 L541.51,185.46 L544.21,185.90 L546.91,186.36 L549.61,186.81 L552.31,187.28 L555.01,187.74 L557.71,188.21 L560.41,188.69 L563.10,189.17 L565.80,189.65 L568.49,190.14 L571.19,190.64 L573.88,191.13 L576.57,191.64 L579.26,192.14 L581.95,192.65 L584.64,193.17 L587.33,193.69 L590.02,194.21 L592.71,194.74 L595.39,195.27 L598.08,195.81 L600.76,196.35 L603.45,196.89 L606.13,197.44 L608.81,198.00 L611.50,198.55 L614.18,199.11 L616.86,199.68 L619.53,200.25 L622.21,200.82 L624.89,201.40 L627.56,201.98 L630.24,202.56 L632.91,203.15 L635.59,203.75 L638.26,204.34 L640.93,204.94 L643.60,205.55 L646.27,206.15 L648.94,206.77 L651.61,207.38 L654.28,208.00 L656.94,208.62 L659.61,209.25 L662.27,209.88 L664.94,210.51 L667.60,211.15 L670.26,211.79 L672.92,212.44 L675.58,213.08 L678.24,213.73 L680.89,214.39 L683.55,215.05 L686.21,215.71 L688.86,216.37 L691.52,217.04 L694.17,217.71 L696.82,218.39 L699.47,219.07 L702.12,219.75 L704.77,220.43 L707.42,221.12 L710.06,221.81 L712.71,222.51 L715.35,223.20 L718.00,223.90 L720.64,224.60 L723.28,225.31 L725.93,226.01 L728.57,226.72 L731.21,227.43 L733.85,228.14 L736.49,228.85 L739.13,229.56 L741.78,230.27 L744.42,230.98 L747.06,231.69 L749.70,232.40 L752.34,233.12 L754.98,233.83 L757.62,234.54 L760.26,235.25 L762.91,235.96 L765.55,236.66 L768.19,237.37 L770.83,238.08 L773.48,238.78 L776.12,239.48 L778.77,240.18 L781.41,240.88 L784.06,241.58 L786.71,242.28 L789.35,242.97 L792.00,243.67 L794.65,244.36 L797.30,245.05 L799.95,245.74 L802.60,246.43 L805.25,247.12 L807.90,247.81 L810.55,248.50 L813.20,249.19 L815.84,249.88 L818.49,250.57 L821.14,251.27 L823.79,251.96 L826.44,252.66 L829.08,253.36 L831.73,254.07 L834.37,254.77 L837.02,255.49 L839.66,256.20 L842.30,256.92 L844.94,257.65 L847.58,258.37 L850.21,259.11 L852.85,259.85 L855.48,260.60 L858.11,261.35 L860.74,262.11 L863.37,262.88 L865.99,263.65 L868.62,264.43 L871.24,265.22 L873.86,266.02 L876.47,266.82 L879.08,267.64 L881.69,268.47 L884.30,269.30" fill="none" stroke="#d58a4c" stroke-width="1.5" stroke-linejoin="round" stroke-linecap="round"/>
<path d="M116.30,269.30 L116.74,272.12 L117.59,274.64 L118.80,276.87 L120.31,278.85 L122.08,280.61 L124.05,282.16 L126.16,283.54 L128.37,284.78 L130.64,285.90 L132.96,286.89 L135.33,287.78 L137.75,288.57 L140.20,289.25 L142.70,289.85 L145.23,290.36 L147.79,290.80 L150.37,291.17 L152.98,291.47 L155.61,291.71 L158.26,291.91 L160.91,292.06 L163.57,292.17 L166.24,292.25 L168.91,292.31 L171.57,292.35 L174.23,292.38 L176.89,292.39 L179.54,292.39 L182.19,292.37 L184.83,292.34 L187.47,292.29 L190.10,292.23 L192.74,292.16 L195.36,292.08 L197.99,291.98 L200.61,291.88 L203.23,291.76 L205.85,291.63 L208.46,291.49 L211.07,291.34 L213.68,291.18 L216.28,291.01 L218.89,290.83 L221.49,290.64 L224.08,290.45 L226.68,290.25 L229.28,290.03 L231.87,289.82 L234.46,289.59 L237.05,289.36 L239.64,289.12 L242.23,288.88 L244.81,288.63 L247.40,288.37 L249.98,288.11 L252.57,287.85 L255.15,287.58 L257.73,287.31 L260.32,287.04 L262.90,286.76 L265.48,286.48 L268.06,286.20 L270.64,285.91 L273.23,285.63 L275.81,285.34 L278.39,285.05 L280.98,284.76 L283.56,284.47 L286.15,284.18 L288.73,283.89 L291.31,283.59 L293.90,283.30 L296.48,283.00 L299.07,282.70 L301.66,282.40 L304.24,282.11 L306.83,281.81 L309.41,281.50 L312.00,281.20 L314.59,280.90 L317.17,280.60 L319.76,280.29 L322.35,279.99 L324.94,279.69 L327.53,279.38 L330.11,279.08 L332.70,278.77 L335.29,278.47 L337.88,278.16 L340.47,277.86 L343.06,277.55 L345.65,277.25 L348.24,276.94 L350.83,276.64 L353.42,276.33 L356.01,276.03 L358.60,275.73 L361.19,275.42 L363.79,275.12 L366.38,274.82 L368.97,274.51 L371.56,274.21 L374.15,273.91 L376.75,273.61 L379.34,273.31 L381.93,273.02 L384.53,272.72 L387.12,272.42 L389.71,272.13 L392.31,271.83 L394.90,271.54 L397.50,271.25 L400.09,270.96 L402.69,270.67 L405.28,270.38 L407.88,270.10 L410.47,269.81 L413.07,269.53 L415.66,269.25 L418.26,268.97 L420.86,268.69 L423.45,268.41 L426.05,268.14 L428.65,267.86 L431.24,267.59 L433.84,267.32 L436.44,267.06 L439.04,266.79 L441.64,266.53 L444.23,266.27 L446.83,266.01 L449.43,265.76 L452.03,265.50 L454.63,265.25 L457.23,265.00 L459.83,264.76 L462.43,264.51 L465.03,264.27 L467.63,264.04 L470.23,263.80 L472.83,263.57 L475.43,263.34 L478.03,263.12 L480.63,262.89 L483.23,262.67 L485.83,262.46 L488.44,262.24 L491.04,262.03 L493.64,261.83 L496.24,261.62 L498.84,261.42 L501.45,261.22 L504.05,261.03 L506.65,260.84 L509.25,260.65 L511.86,260.47 L514.46,260.29 L517.06,260.11 L519.67,259.94 L522.27,259.76 L524.87,259.60 L527.48,259.43 L530.08,259.27 L532.69,259.12 L535.29,258.96 L537.90,258.81 L540.50,258.67 L543.10,258.52 L545.71,258.38 L548.31,258.25 L550.92,258.12 L553.52,257.99 L556.13,257.86 L558.74,257.74 L561.34,257.62 L563.95,257.51 L566.55,257.40 L569.16,257.29 L571.76,257.19 L574.37,257.09 L576.98,256.99 L579.58,256.90 L582.19,256.81 L584.79,256.73 L587.40,256.65 L590.01,256.57 L592.61,256.50 L595.22,256.43 L597.83,256.37 L600.43,256.30 L603.04,256.25 L605.65,256.19 L608.25,256.14 L610.86,256.10 L613.47,256.06 L616.07,256.02 L618.68,255.98 L621.29,255.95 L623.89,255.93 L626.50,255.91 L629.11,255.89 L631.71,255.87 L634.32,255.87 L636.93,255.86 L639.53,255.86 L642.14,255.86 L644.75,255.87 L647.35,255.88 L649.96,255.89 L652.57,255.91 L655.17,255.94 L657.78,255.96 L660.39,256.00 L663.00,256.03 L665.60,256.07 L668.21,256.12 L670.82,256.16 L673.42,256.22 L676.03,256.28 L678.64,256.34 L681.24,256.40 L683.85,256.47 L686.45,256.55 L689.06,256.63 L691.67,256.71 L694.27,256.80 L696.88,256.89 L699.49,256.99 L702.09,257.09 L704.70,257.20 L707.30,257.31 L709.91,257.42 L712.52,257.54 L715.12,257.66 L717.73,257.79 L720.33,257.92 L722.94,258.05 L725.54,258.19 L728.15,258.33 L730.75,258.48 L733.36,258.62 L735.96,258.77 L738.57,258.93 L741.17,259.08 L743.78,259.24 L746.38,259.41 L748.99,259.57 L751.59,259.74 L754.20,259.91 L756.80,260.08 L759.41,260.25 L762.01,260.43 L764.61,260.61 L767.22,260.79 L769.82,260.97 L772.43,261.16 L775.03,261.34 L777.63,261.53 L780.24,261.72 L782.84,261.91 L785.44,262.10 L788.05,262.30 L790.65,262.49 L793.25,262.68 L795.86,262.88 L798.46,263.08 L801.06,263.27 L803.67,263.47 L806.27,263.67 L808.87,263.87 L811.47,264.06 L814.08,264.26 L816.68,264.46 L819.28,264.66 L821.88,264.86 L824.48,265.06 L827.09,265.25 L829.69,265.45 L832.29,265.65 L834.89,265.84 L837.49,266.04 L840.09,266.23 L842.70,266.43 L845.30,266.62 L847.90,266.81 L850.50,267.00 L853.10,267.19 L855.70,267.37 L858.30,267.56 L860.90,267.74 L863.50,267.92 L866.10,268.10 L868.70,268.28 L871.30,268.46 L873.90,268.63 L876.50,268.80 L879.10,268.97 L881.70,269.14 L884.30,269.30" fill="none" stroke="#d58a4c" stroke-width="1.5" stroke-linejoin="round" stroke-linecap="round"/>
<path d="M116.30,269.30 L116.50,266.33 L116.81,263.38 L117.22,260.47 L117.74,257.58 L118.35,254.71 L119.06,251.87 L119.85,249.06 L120.72,246.27 L121.66,243.50 L122.68,240.75 L123.76,238.03 L124.91,235.32 L126.10,232.63 L127.35,229.97 L128.64,227.31 L129.97,224.68 L131.34,222.06 L132.73,219.46 L134.15,216.87 L135.60,214.30 L137.08,211.75 L138.59,209.22 L140.14,206.72 L141.73,204.25 L143.35,201.81 L145.03,199.40 L146.74,197.04 L148.51,194.71 L150.33,192.42 L152.19,190.17 L154.09,187.96 L156.04,185.79 L158.03,183.65 L160.05,181.54 L162.11,179.46 L164.21,177.42 L166.34,175.40 L168.49,173.41 L170.68,171.45 L172.89,169.51 L175.12,167.60 L177.38,165.71 L179.65,163.83 L181.94,161.98 L184.25,160.15 L186.58,158.34 L188.93,156.55 L191.30,154.78 L193.68,153.04 L196.08,151.32 L198.50,149.63 L200.94,147.96 L203.39,146.31 L205.86,144.69 L208.34,143.10 L210.85,141.53 L213.36,139.98 L215.90,138.47 L218.44,136.98 L221.01,135.52 L223.59,134.09 L226.18,132.69 L228.79,131.32 L231.41,129.98 L234.05,128.67 L236.69,127.39 L239.36,126.14 L242.03,124.93 L244.72,123.74 L247.43,122.59 L250.14,121.48 L252.87,120.39 L255.61,119.35 L258.36,118.33 L261.12,117.35 L263.90,116.41 L266.68,115.51 L269.48,114.64 L272.29,113.80 L275.11,113.01 L277.93,112.25 L280.77,111.52 L283.62,110.83 L286.47,110.17 L289.34,109.54 L292.21,108.94 L295.09,108.37 L297.97,107.83 L300.86,107.31 L303.76,106.82 L306.66,106.36 L309.57,105.92 L312.49,105.50 L315.41,105.10 L318.33,104.73 L321.25,104.37 L324.18,104.03 L327.11,103.71 L330.05,103.40 L332.98,103.11 L335.92,102.83 L338.86,102.57 L341.80,102.33 L344.74,102.09 L347.68,101.88 L350.63,101.67 L353.57,101.49 L356.52,101.31 L359.46,101.16 L362.41,101.01 L365.36,100.89 L368.30,100.77 L371.25,100.68 L374.20,100.60 L377.14,100.53 L380.09,100.48 L383.04,100.44 L385.98,100.42 L388.93,100.42 L391.87,100.43 L394.81,100.46 L397.75,100.50 L400.69,100.56 L403.63,100.63 L406.57,100.72 L409.51,100.82 L412.45,100.94 L415.38,101.08 L418.32,101.23 L421.25,101.39 L424.18,101.57 L427.11,101.77 L430.04,101.97 L432.97,102.20 L435.90,102.43 L438.82,102.69 L441.74,102.95 L444.67,103.23 L447.59,103.53 L450.51,103.83 L453.42,104.16 L456.34,104.49 L459.25,104.84 L462.17,105.20 L465.08,105.58 L467.99,105.97 L470.90,106.37 L473.80,106.79 L476.71,107.22 L479.61,107.66 L482.51,108.12 L485.41,108.59 L488.31,109.07 L491.20,109.56 L494.10,110.07 L496.99,110.59 L499.88,111.12 L502.76,111.66 L505.65,112.22 L508.53,112.79 L511.41,113.37 L514.29,113.96 L517.17,114.56 L520.04,115.18 L522.92,115.81 L525.79,116.44 L528.66,117.09 L531.52,117.76 L534.38,118.43 L537.25,119.11 L540.10,119.81 L542.96,120.51 L545.81,121.23 L548.67,121.96 L551.51,122.70 L554.36,123.45 L557.21,124.21 L560.05,124.98 L562.88,125.76 L565.72,126.55 L568.55,127.35 L571.39,128.16 L574.21,128.98 L577.04,129.81 L579.86,130.65 L582.68,131.50 L585.50,132.36 L588.31,133.23 L591.12,134.11 L593.93,135.00 L596.74,135.90 L599.54,136.81 L602.34,137.72 L605.13,138.65 L607.93,139.58 L610.72,140.52 L613.50,141.47 L616.29,142.43 L619.07,143.40 L621.84,144.38 L624.62,145.36 L627.39,146.36 L630.16,147.36 L632.92,148.37 L635.68,149.39 L638.44,150.41 L641.19,151.44 L643.95,152.48 L646.69,153.53 L649.44,154.59 L652.18,155.65 L654.92,156.72 L657.65,157.80 L660.38,158.88 L663.11,159.97 L665.84,161.07 L668.56,162.18 L671.28,163.29 L674.00,164.41 L676.71,165.53 L679.43,166.66 L682.14,167.80 L684.84,168.94 L687.55,170.09 L690.25,171.24 L692.95,172.40 L695.64,173.56 L698.34,174.73 L701.03,175.91 L703.72,177.09 L706.41,178.28 L709.10,179.47 L711.78,180.66 L714.46,181.86 L717.14,183.07 L719.82,184.28 L722.50,185.49 L725.17,186.71 L727.84,187.94 L730.51,189.16 L733.18,190.39 L735.85,191.63 L738.52,192.87 L741.18,194.11 L743.84,195.35 L746.51,196.60 L749.17,197.86 L751.82,199.11 L754.48,200.37 L757.14,201.63 L759.79,202.90 L762.45,204.16 L765.10,205.43 L767.75,206.71 L770.40,207.98 L773.05,209.26 L775.70,210.55 L778.35,211.83 L780.99,213.12 L783.64,214.42 L786.28,215.71 L788.92,217.01 L791.55,218.32 L794.19,219.63 L796.82,220.94 L799.45,222.26 L802.08,223.59 L804.70,224.92 L807.32,226.25 L809.94,227.59 L812.56,228.93 L815.18,230.28 L817.79,231.64 L820.39,233.00 L823.00,234.36 L825.60,235.74 L828.20,237.12 L830.79,238.50 L833.38,239.89 L835.97,241.29 L838.55,242.70 L841.13,244.11 L843.71,245.53 L846.28,246.95 L848.85,248.39 L851.41,249.83 L853.97,251.28 L856.52,252.73 L859.07,254.20 L861.62,255.67 L864.16,257.15 L866.69,258.64 L869.23,260.13 L871.75,261.64 L874.27,263.15 L876.79,264.68 L879.30,266.21 L881.80,267.75 L884.30,269.30" fill="none" stroke="#3d68e0" stroke-width="1.5" stroke-linejoin="round" stroke-linecap="round"/>
<path d="M116.30,269.30 L116.30,272.11 L116.30,274.92 L116.30,277.73 L116.30,280.51 L116.65,283.25 L117.25,285.93 L118.03,288.54 L118.99,291.06 L120.11,293.47 L121.41,295.76 L122.87,297.91 L124.51,299.90 L126.29,301.75 L128.22,303.46 L130.27,305.04 L132.43,306.51 L134.69,307.86 L137.03,309.12 L139.44,310.28 L141.91,311.37 L144.41,312.40 L146.93,313.36 L149.47,314.28 L152.01,315.15 L154.57,315.97 L157.13,316.75 L159.71,317.49 L162.29,318.18 L164.88,318.83 L167.48,319.44 L170.09,320.01 L172.70,320.55 L175.32,321.05 L177.95,321.51 L180.58,321.94 L183.22,322.33 L185.87,322.69 L188.52,323.02 L191.18,323.32 L193.84,323.59 L196.50,323.83 L199.17,324.05 L201.84,324.24 L204.52,324.41 L207.20,324.55 L209.88,324.67 L212.56,324.77 L215.25,324.85 L217.93,324.91 L220.62,324.95 L223.31,324.98 L226.00,324.99 L228.69,324.98 L231.38,324.96 L234.07,324.93 L236.76,324.89 L239.45,324.84 L242.13,324.78 L244.82,324.71 L247.50,324.64 L250.18,324.55 L252.86,324.46 L255.54,324.36 L258.22,324.25 L260.89,324.13 L263.57,324.01 L266.24,323.88 L268.92,323.74 L271.59,323.60 L274.26,323.45 L276.93,323.30 L279.60,323.14 L282.27,322.97 L284.94,322.80 L287.60,322.62 L290.27,322.44 L292.93,322.25 L295.60,322.06 L298.26,321.86 L300.93,321.66 L303.59,321.45 L306.25,321.24 L308.91,321.03 L311.57,320.81 L314.23,320.59 L316.89,320.37 L319.55,320.14 L322.21,319.91 L324.87,319.68 L327.53,319.44 L330.19,319.21 L332.85,318.97 L335.51,318.73 L338.17,318.49 L340.83,318.24 L343.49,318.00 L346.15,317.75 L348.81,317.51 L351.46,317.26 L354.12,317.01 L356.78,316.76 L359.44,316.52 L362.10,316.27 L364.77,316.02 L367.43,315.77 L370.09,315.53 L372.75,315.28 L375.41,315.03 L378.07,314.79 L380.74,314.54 L383.40,314.29 L386.06,314.05 L388.73,313.80 L391.39,313.56 L394.05,313.31 L396.72,313.07 L399.38,312.82 L402.04,312.58 L404.71,312.33 L407.37,312.09 L410.04,311.84 L412.70,311.60 L415.37,311.35 L418.03,311.11 L420.70,310.87 L423.36,310.62 L426.03,310.38 L428.69,310.14 L431.36,309.89 L434.03,309.65 L436.69,309.41 L439.36,309.16 L442.02,308.92 L444.69,308.68 L447.35,308.44 L450.02,308.20 L452.69,307.95 L455.35,307.71 L458.02,307.47 L460.68,307.23 L463.35,306.99 L466.01,306.75 L468.68,306.51 L471.34,306.27 L474.01,306.02 L476.67,305.78 L479.34,305.54 L482.01,305.30 L484.67,305.06 L487.34,304.82 L490.00,304.58 L492.67,304.34 L495.33,304.10 L498.00,303.86 L500.66,303.62 L503.33,303.39 L505.99,303.15 L508.66,302.91 L511.32,302.67 L513.99,302.43 L516.65,302.19 L519.32,301.95 L521.98,301.71 L524.64,301.47 L527.31,301.24 L529.97,301.00 L532.64,300.76 L535.30,300.52 L537.97,300.28 L540.63,300.05 L543.30,299.81 L545.96,299.57 L548.63,299.33 L551.29,299.09 L553.96,298.86 L556.62,298.62 L559.28,298.38 L561.95,298.14 L564.61,297.91 L567.28,297.67 L569.94,297.43 L572.61,297.20 L575.27,296.96 L577.93,296.72 L580.60,296.48 L583.26,296.25 L585.93,296.01 L588.59,295.77 L591.26,295.54 L593.92,295.30 L596.58,295.06 L599.25,294.83 L601.91,294.59 L604.58,294.35 L607.24,294.12 L609.90,293.88 L612.57,293.64 L615.23,293.41 L617.90,293.17 L620.56,292.93 L623.22,292.70 L625.89,292.46 L628.55,292.23 L631.22,291.99 L633.88,291.75 L636.54,291.52 L639.21,291.28 L641.87,291.04 L644.54,290.81 L647.20,290.57 L649.86,290.33 L652.53,290.10 L655.19,289.86 L657.86,289.63 L660.52,289.39 L663.18,289.15 L665.85,288.92 L668.51,288.68 L671.17,288.44 L673.84,288.21 L676.50,287.97 L679.17,287.73 L681.83,287.50 L684.49,287.26 L687.16,287.03 L689.82,286.79 L692.49,286.55 L695.15,286.32 L697.81,286.08 L700.48,285.84 L703.14,285.61 L705.80,285.37 L708.47,285.13 L711.13,284.89 L713.80,284.66 L716.46,284.42 L719.12,284.18 L721.79,283.95 L724.45,283.71 L727.11,283.47 L729.78,283.24 L732.44,283.00 L735.11,282.76 L737.77,282.52 L740.43,282.29 L743.10,282.05 L745.76,281.81 L748.43,281.57 L751.09,281.33 L753.75,281.10 L756.42,280.86 L759.08,280.62 L761.74,280.38 L764.41,280.14 L767.07,279.91 L769.74,279.67 L772.40,279.43 L775.06,279.19 L777.73,278.95 L780.39,278.71 L783.06,278.47 L785.72,278.24 L788.38,278.00 L791.05,277.76 L793.71,277.52 L796.38,277.28 L799.04,277.04 L801.70,276.80 L804.37,276.56 L807.03,276.32 L809.70,276.08 L812.36,275.84 L815.03,275.60 L817.69,275.36 L820.35,275.12 L823.02,274.88 L825.68,274.64 L828.35,274.40 L831.01,274.15 L833.67,273.91 L836.34,273.67 L839.00,273.43 L841.67,273.19 L844.33,272.95 L847.00,272.70 L849.66,272.46 L852.33,272.22 L854.99,271.98 L857.65,271.73 L860.32,271.49 L862.98,271.25 L865.65,271.01 L868.31,270.76 L870.98,270.52 L873.64,270.28 L876.31,270.03 L878.97,269.79 L881.64,269.54 L884.30,269.30" fill="none" stroke="#3d68e0" stroke-width="1.5" stroke-linejoin="round" stroke-linecap="round"/>
<path d="M116.30,269.30 L116.73,266.50 L117.21,263.68 L117.74,260.86 L118.33,258.04 L118.98,255.23 L119.71,252.45 L120.52,249.70 L121.42,246.99 L122.41,244.33 L123.52,241.73 L124.74,239.20 L126.08,236.75 L127.54,234.37 L129.12,232.08 L130.81,229.85 L132.59,227.69 L134.45,225.59 L136.38,223.53 L138.38,221.52 L140.42,219.55 L142.50,217.61 L144.61,215.69 L146.73,213.79 L148.87,211.91 L151.00,210.03 L153.15,208.17 L155.30,206.32 L157.46,204.49 L159.64,202.68 L161.82,200.88 L164.02,199.11 L166.24,197.37 L168.47,195.65 L170.73,193.95 L173.00,192.29 L175.29,190.65 L177.61,189.05 L179.95,187.48 L182.31,185.94 L184.69,184.44 L187.10,182.96 L189.53,181.52 L191.97,180.10 L194.43,178.70 L196.91,177.34 L199.40,175.99 L201.91,174.67 L204.42,173.37 L206.95,172.09 L209.48,170.83 L212.03,169.59 L214.58,168.36 L217.14,167.15 L219.71,165.96 L222.29,164.79 L224.87,163.63 L227.47,162.49 L230.07,161.37 L232.67,160.27 L235.29,159.18 L237.91,158.12 L240.54,157.07 L243.17,156.04 L245.82,155.02 L248.47,154.03 L251.12,153.05 L253.78,152.09 L256.45,151.14 L259.13,150.22 L261.81,149.31 L264.50,148.42 L267.19,147.55 L269.89,146.70 L272.59,145.86 L275.30,145.05 L278.02,144.25 L280.74,143.46 L283.46,142.70 L286.19,141.96 L288.93,141.23 L291.66,140.52 L294.41,139.83 L297.16,139.15 L299.91,138.50 L302.67,137.86 L305.43,137.24 L308.19,136.64 L310.96,136.05 L313.74,135.49 L316.51,134.94 L319.29,134.41 L322.08,133.90 L324.86,133.41 L327.65,132.93 L330.44,132.47 L333.24,132.03 L336.04,131.61 L338.84,131.21 L341.64,130.83 L344.45,130.46 L347.26,130.11 L350.07,129.78 L352.88,129.47 L355.69,129.18 L358.51,128.90 L361.33,128.65 L364.14,128.41 L366.97,128.19 L369.79,127.99 L372.61,127.80 L375.43,127.64 L378.26,127.49 L381.08,127.36 L383.91,127.25 L386.74,127.16 L389.56,127.09 L392.39,127.03 L395.22,126.99 L398.05,126.98 L400.87,126.98 L403.70,127.00 L406.53,127.03 L409.35,127.09 L412.18,127.16 L415.00,127.25 L417.83,127.36 L420.65,127.49 L423.47,127.64 L426.29,127.81 L429.11,127.99 L431.93,128.20 L434.75,128.42 L437.57,128.65 L440.38,128.91 L443.19,129.18 L446.01,129.47 L448.82,129.78 L451.62,130.10 L454.43,130.44 L457.24,130.79 L460.04,131.16 L462.84,131.55 L465.64,131.95 L468.44,132.36 L471.24,132.79 L474.03,133.24 L476.83,133.69 L479.62,134.17 L482.41,134.65 L485.20,135.15 L487.98,135.66 L490.77,136.19 L493.55,136.73 L496.33,137.28 L499.10,137.84 L501.88,138.42 L504.65,139.00 L507.42,139.60 L510.19,140.21 L512.96,140.83 L515.72,141.46 L518.48,142.10 L521.24,142.75 L524.00,143.42 L526.75,144.09 L529.50,144.77 L532.25,145.46 L535.00,146.16 L537.74,146.87 L540.48,147.58 L543.22,148.31 L545.96,149.04 L548.69,149.78 L551.42,150.53 L554.15,151.29 L556.87,152.05 L559.60,152.82 L562.32,153.60 L565.03,154.39 L567.75,155.18 L570.46,155.98 L573.17,156.78 L575.88,157.60 L578.58,158.42 L581.29,159.24 L583.99,160.07 L586.69,160.91 L589.39,161.75 L592.08,162.60 L594.77,163.46 L597.47,164.32 L600.16,165.18 L602.84,166.05 L605.53,166.93 L608.21,167.81 L610.90,168.69 L613.58,169.59 L616.26,170.48 L618.94,171.38 L621.61,172.29 L624.29,173.19 L626.96,174.11 L629.63,175.02 L632.31,175.94 L634.98,176.87 L637.65,177.80 L640.31,178.73 L642.98,179.66 L645.65,180.60 L648.31,181.54 L650.98,182.49 L653.64,183.44 L656.30,184.39 L658.96,185.34 L661.63,186.29 L664.29,187.25 L666.95,188.21 L669.61,189.17 L672.27,190.14 L674.92,191.10 L677.58,192.07 L680.24,193.04 L682.90,194.01 L685.55,194.99 L688.21,195.96 L690.87,196.94 L693.52,197.91 L696.18,198.89 L698.83,199.87 L701.49,200.85 L704.14,201.83 L706.80,202.82 L709.45,203.80 L712.11,204.79 L714.76,205.77 L717.41,206.76 L720.07,207.74 L722.72,208.73 L725.38,209.72 L728.03,210.70 L730.68,211.69 L733.34,212.68 L735.99,213.67 L738.64,214.65 L741.30,215.64 L743.95,216.63 L746.60,217.62 L749.26,218.60 L751.91,219.59 L754.56,220.57 L757.22,221.56 L759.87,222.54 L762.52,223.53 L765.18,224.51 L767.83,225.49 L770.49,226.47 L773.14,227.45 L775.80,228.43 L778.45,229.41 L781.11,230.38 L783.77,231.35 L786.42,232.33 L789.08,233.30 L791.74,234.27 L794.39,235.23 L797.05,236.20 L799.71,237.16 L802.37,238.13 L805.03,239.09 L807.69,240.05 L810.34,241.02 L813.00,241.98 L815.66,242.94 L818.32,243.91 L820.97,244.87 L823.63,245.84 L826.29,246.81 L828.94,247.78 L831.59,248.76 L834.24,249.73 L836.90,250.72 L839.55,251.70 L842.19,252.69 L844.84,253.68 L847.49,254.68 L850.13,255.68 L852.77,256.69 L855.41,257.70 L858.05,258.72 L860.69,259.74 L863.32,260.77 L865.95,261.81 L868.58,262.86 L871.21,263.91 L873.83,264.97 L876.45,266.04 L879.07,267.12 L881.69,268.20 L884.30,269.30" fill="none" stroke="#153f22" stroke-width="3" stroke-linejoin="round" stroke-linecap="round"/>
<path d="M116.30,269.30 L116.91,272.16 L117.71,274.86 L118.68,277.42 L119.82,279.84 L121.11,282.13 L122.54,284.28 L124.11,286.32 L125.80,288.25 L127.61,290.07 L129.52,291.79 L131.52,293.41 L133.61,294.95 L135.77,296.41 L137.99,297.80 L140.27,299.12 L142.59,300.38 L144.95,301.59 L147.33,302.75 L149.72,303.87 L152.13,304.96 L154.56,306.00 L156.99,307.00 L159.44,307.97 L161.91,308.90 L164.39,309.79 L166.88,310.66 L169.38,311.48 L171.89,312.28 L174.42,313.04 L176.95,313.77 L179.49,314.47 L182.05,315.15 L184.61,315.79 L187.18,316.41 L189.77,317.00 L192.35,317.56 L194.95,318.10 L197.55,318.62 L200.16,319.12 L202.78,319.59 L205.40,320.04 L208.03,320.47 L210.66,320.88 L213.29,321.27 L215.93,321.65 L218.58,322.01 L221.22,322.35 L223.87,322.68 L226.52,323.00 L229.17,323.30 L231.83,323.59 L234.48,323.87 L237.14,324.13 L239.79,324.39 L242.45,324.64 L245.10,324.88 L247.76,325.12 L250.41,325.34 L253.06,325.56 L255.72,325.77 L258.37,325.97 L261.02,326.16 L263.67,326.35 L266.32,326.52 L268.97,326.69 L271.62,326.86 L274.27,327.01 L276.92,327.16 L279.57,327.30 L282.22,327.44 L284.86,327.56 L287.51,327.68 L290.16,327.79 L292.81,327.90 L295.45,328.00 L298.10,328.09 L300.75,328.18 L303.39,328.26 L306.04,328.34 L308.68,328.40 L311.33,328.47 L313.97,328.52 L316.62,328.57 L319.26,328.62 L321.90,328.65 L324.55,328.69 L327.19,328.71 L329.84,328.74 L332.48,328.75 L335.12,328.76 L337.77,328.77 L340.41,328.77 L343.05,328.77 L345.69,328.76 L348.34,328.75 L350.98,328.73 L353.62,328.70 L356.26,328.68 L358.91,328.65 L361.55,328.61 L364.19,328.57 L366.83,328.53 L369.47,328.48 L372.12,328.43 L374.76,328.37 L377.40,328.31 L380.04,328.25 L382.68,328.18 L385.32,328.11 L387.97,328.03 L390.61,327.96 L393.25,327.88 L395.89,327.79 L398.53,327.71 L401.18,327.62 L403.82,327.53 L406.46,327.43 L409.10,327.33 L411.75,327.23 L414.39,327.13 L417.03,327.03 L419.68,326.92 L422.32,326.81 L424.96,326.70 L427.61,326.58 L430.25,326.47 L432.89,326.35 L435.54,326.23 L438.18,326.11 L440.83,325.99 L443.47,325.87 L446.12,325.74 L448.76,325.62 L451.41,325.49 L454.05,325.36 L456.70,325.23 L459.34,325.10 L461.99,324.97 L464.64,324.84 L467.28,324.70 L469.93,324.57 L472.58,324.43 L475.23,324.29 L477.87,324.15 L480.52,324.01 L483.17,323.87 L485.82,323.72 L488.46,323.58 L491.11,323.43 L493.76,323.28 L496.41,323.13 L499.06,322.97 L501.70,322.81 L504.35,322.65 L507.00,322.49 L509.64,322.33 L512.29,322.16 L514.94,321.99 L517.58,321.82 L520.23,321.64 L522.88,321.46 L525.52,321.28 L528.17,321.10 L530.81,320.91 L533.46,320.72 L536.10,320.53 L538.74,320.33 L541.39,320.13 L544.03,319.92 L546.67,319.72 L549.31,319.51 L551.95,319.29 L554.60,319.07 L557.24,318.85 L559.88,318.62 L562.51,318.39 L565.15,318.16 L567.79,317.92 L570.43,317.67 L573.06,317.43 L575.70,317.17 L578.33,316.92 L580.97,316.66 L583.60,316.39 L586.23,316.12 L588.87,315.85 L591.50,315.57 L594.13,315.29 L596.76,315.00 L599.39,314.71 L602.02,314.41 L604.64,314.12 L607.27,313.81 L609.90,313.51 L612.53,313.20 L615.15,312.89 L617.78,312.57 L620.40,312.25 L623.03,311.93 L625.65,311.60 L628.28,311.27 L630.90,310.94 L633.52,310.61 L636.15,310.27 L638.77,309.93 L641.39,309.59 L644.02,309.24 L646.64,308.89 L649.26,308.54 L651.88,308.19 L654.50,307.83 L657.13,307.48 L659.75,307.12 L662.37,306.76 L664.99,306.39 L667.61,306.03 L670.23,305.66 L672.86,305.29 L675.48,304.92 L678.10,304.55 L680.72,304.17 L683.34,303.79 L685.96,303.41 L688.58,303.03 L691.21,302.65 L693.83,302.27 L696.45,301.88 L699.07,301.49 L701.69,301.10 L704.31,300.70 L706.93,300.31 L709.55,299.91 L712.17,299.51 L714.78,299.11 L717.40,298.70 L720.02,298.29 L722.64,297.88 L725.26,297.47 L727.87,297.05 L730.49,296.64 L733.11,296.21 L735.72,295.79 L738.34,295.36 L740.95,294.93 L743.57,294.50 L746.18,294.07 L748.79,293.63 L751.41,293.19 L754.02,292.75 L756.63,292.30 L759.24,291.85 L761.85,291.40 L764.46,290.94 L767.07,290.48 L769.68,290.02 L772.29,289.55 L774.89,289.08 L777.50,288.61 L780.10,288.14 L782.71,287.66 L785.31,287.18 L787.91,286.69 L790.52,286.20 L793.12,285.71 L795.72,285.21 L798.32,284.71 L800.91,284.21 L803.51,283.71 L806.11,283.20 L808.71,282.69 L811.30,282.19 L813.90,281.68 L816.50,281.17 L819.09,280.66 L821.69,280.16 L824.29,279.65 L826.89,279.14 L829.48,278.64 L832.08,278.14 L834.68,277.65 L837.28,277.15 L839.88,276.66 L842.48,276.18 L845.08,275.69 L847.69,275.22 L850.29,274.75 L852.90,274.28 L855.50,273.82 L858.11,273.37 L860.72,272.92 L863.34,272.49 L865.95,272.06 L868.56,271.63 L871.18,271.22 L873.80,270.82 L876.42,270.42 L879.05,270.04 L881.67,269.66 L884.30,269.30" fill="none" stroke="#153f22" stroke-width="3" stroke-linejoin="round" stroke-linecap="round"/>
<path d="M116.30,269.30 L116.43,266.09 L116.83,262.93 L117.48,259.79 L118.40,256.70 L119.59,253.65 L121.03,250.63 L122.73,247.66 L124.69,244.74 L126.91,241.85 L129.38,239.02 L132.11,236.24 L135.09,233.51 L138.33,230.83 L141.81,228.21 L145.53,225.64 L149.50,223.14 L153.71,220.71 L158.15,218.34 L162.83,216.03 L167.75,213.80 L172.89,211.65 L178.25,209.57 L183.84,207.56 L189.64,205.64 L195.65,203.80 L201.88,202.05 L208.30,200.38 L214.93,198.80 L221.76,197.31 L228.77,195.92 L235.97,194.61 L243.35,193.40 L250.91,192.29 L258.64,191.27 L266.54,190.34 L274.59,189.52 L282.80,188.78 L291.16,188.15 L299.66,187.61 L308.30,187.17 L317.07,186.82 L325.97,186.57 L334.98,186.40 L344.11,186.34 L353.35,186.36 L362.69,186.47 L372.12,186.66 L381.64,186.94 L391.24,187.31 L400.91,187.75 L410.66,188.28 L420.46,188.88 L430.32,189.55 L440.23,190.30 L450.18,191.11 L460.16,191.99 L470.17,192.94 L480.20,193.94 L490.25,195.00 L500.30,196.12 L510.35,197.28 L520.40,198.50 L530.43,199.76 L540.44,201.07 L550.42,202.41 L560.37,203.80 L570.28,205.22 L580.14,206.67 L589.94,208.15 L599.69,209.65 L609.36,211.18 L618.96,212.74 L628.48,214.31 L637.91,215.89 L647.25,217.49 L656.49,219.10 L665.62,220.72 L674.63,222.35 L683.53,223.98 L692.30,225.61 L700.94,227.24 L709.44,228.87 L717.80,230.49 L726.01,232.11 L734.06,233.71 L741.96,235.30 L749.69,236.88 L757.25,238.44 L764.63,239.98 L771.83,241.50 L778.84,243.00 L785.67,244.47 L792.30,245.92 L798.72,247.33 L804.95,248.72 L810.96,250.06 L816.76,251.38 L822.35,252.65 L827.71,253.89 L832.85,255.08 L837.77,256.23 L842.45,257.33 L846.89,258.39 L851.10,259.39 L855.07,260.35 L858.79,261.25 L862.27,262.09 L865.51,262.88 L868.49,263.61 L871.22,264.29 L873.69,264.90 L875.91,265.45 L877.87,265.94 L879.57,266.37 L881.01,266.73 L882.20,267.03 L883.12,267.26 L883.77,267.43 L884.17,267.52 L884.30,267.56" fill="none" stroke="#dc143c" stroke-width="1.5" stroke-linejoin="round" stroke-linecap="round"/>
<path d="M116.30,269.30 L116.43,272.51 L116.83,275.67 L117.48,278.81 L118.40,281.90 L119.59,284.95 L121.03,287.97 L122.73,290.94 L124.69,293.86 L126.91,296.75 L129.38,299.58 L132.11,302.36 L135.09,305.09 L138.33,307.77 L141.81,310.39 L145.53,312.96 L149.50,315.46 L153.71,317.89 L158.15,320.26 L162.83,322.57 L167.75,324.80 L172.89,326.95 L178.25,329.03 L183.84,331.04 L189.64,332.96 L195.65,334.80 L201.88,336.55 L208.30,338.22 L214.93,339.80 L221.76,341.29 L228.77,342.68 L235.97,343.99 L243.35,345.20 L250.91,346.31 L258.64,347.33 L266.54,348.26 L274.59,349.08 L282.80,349.82 L291.16,350.45 L299.66,350.99 L308.30,351.43 L317.07,351.78 L325.97,352.03 L334.98,352.20 L344.11,352.26 L353.35,352.24 L362.69,352.13 L372.12,351.94 L381.64,351.66 L391.24,351.29 L400.91,350.85 L410.66,350.32 L420.46,349.72 L430.32,349.05 L440.23,348.30 L450.18,347.49 L460.16,346.61 L470.17,345.66 L480.20,344.66 L490.25,343.60 L500.30,342.48 L510.35,341.32 L520.40,340.10 L530.43,338.84 L540.44,337.53 L550.42,336.19 L560.37,334.80 L570.28,333.38 L580.14,331.93 L589.94,330.45 L599.69,328.95 L609.36,327.42 L618.96,325.86 L628.48,324.29 L637.91,322.71 L647.25,321.11 L656.49,319.50 L665.62,317.88 L674.63,316.25 L683.53,314.62 L692.30,312.99 L700.94,311.36 L709.44,309.73 L717.80,308.11 L726.01,306.49 L734.06,304.89 L741.96,303.30 L749.69,301.72 L757.25,300.16 L764.63,298.62 L771.83,297.10 L778.84,295.60 L785.67,294.13 L792.30,292.68 L798.72,291.27 L804.95,289.88 L810.96,288.54 L816.76,287.22 L822.35,285.95 L827.71,284.71 L832.85,283.52 L837.77,282.37 L842.45,281.27 L846.89,280.21 L851.10,279.21 L855.07,278.25 L858.79,277.35 L862.27,276.51 L865.51,275.72 L868.49,274.99 L871.22,274.31 L873.69,273.70 L875.91,273.15 L877.87,272.66 L879.57,272.23 L881.01,271.87 L882.20,271.57 L883.12,271.34 L883.77,271.17 L884.17,271.08 L884.30,271.04" fill="none" stroke="#dc143c" stroke-width="1.5" stroke-linejoin="round" stroke-linecap="round"/>
<text x="266.70" y="285" text-anchor="middle" class="m">0.2</text>
<text x="420.30" y="285" text-anchor="middle" class="m">0.4</text>
<text x="573.90" y="285" text-anchor="middle" class="m">0.6</text>
<text x="727.50" y="285" text-anchor="middle" class="m">0.8</text>
<text x="880.30" y="285" text-anchor="middle" class="m">1</text>
<path d="M113.5,266 L117.5,269.3 L113.5,272.5" fill="none" stroke="#3a8a5a" stroke-width="1.2"/>
<text x="96.8" y="277.8" class="le">L.E.</text>
<rect x="795" y="57" width="220" height="39" fill="#fff"/>
<line x1="808" y1="69.00" x2="839" y2="69.00" stroke="#d58a4c" stroke-width="2"/>
<text x="842.2" y="71.60" class="m">AG 27 Bubble Dancer DLG by Mark Drela</text>
<line x1="808" y1="76.50" x2="839" y2="76.50" stroke="#3d68e0" stroke-width="2"/>
<text x="842.2" y="79.10" class="m">CLARK Y</text>
<line x1="808" y1="83.50" x2="839" y2="83.50" stroke="#2e8b57" stroke-width="3.8"/>
<text x="842.2" y="86.10" class="m">Eppler E374</text>
<line x1="808" y1="91.30" x2="839" y2="91.30" stroke="#dc143c" stroke-width="2"/>
<text x="842.2" y="93.90" class="m">NACA 0009</text>
<text x="2.6" y="61.60" class="m" xml:space="preserve">X-scale =  1.0</text>
<text x="2.6" y="69.35" class="m" xml:space="preserve">Y-scale =  2.4</text>
<text x="2.6" y="77.10" class="m" xml:space="preserve">x =   1.156</text>
<text x="2.6" y="84.85" class="m" xml:space="preserve">y =  0.1066</text>
</g>
</svg>
<div id="dock"><div class="dt">Foil object table</div>
<svg class="abs" style="left:1008px;top:5px" width="16" height="9" viewBox="1008 412 16 9"><rect x="1009.2" y="413.4" width="6.6" height="6.6" rx="1.6" fill="#a3a3a3"/><path d="M1010.6,415.6 L1012.3,414.6 M1012.2,418.2 L1014.4,419" stroke="#fff" stroke-width="0.8"/><rect x="1017" y="413.4" width="6.2" height="6.6" rx="1.6" fill="#a3a3a3"/><rect x="1019.2" y="415.8" width="2" height="2" fill="#555"/><path d="M1018.2,415 L1019.2,415.8 M1022,415 L1021,415.8 M1018.2,418.8 L1019.2,418 M1022,418.8 L1021,418" stroke="#eee" stroke-width="0.6"/></svg></div>
<div class="tbl">
<div class="hdr">
<div class="hc" style="left:7px;width:128px">Name</div>
<div class="hc" style="left:135px;width:71px">Thickness (%)</div>
<div class="hc" style="left:206px;width:71px">at (%)</div>
<div class="hc" style="left:277px;width:70px">Camber (%)</div>
<div class="hc" style="left:347px;width:71px">at (%)</div>
<div class="hc" style="left:418px;width:70px">Points</div>
<div class="hc" style="left:488px;width:70px">TE Flap (°)</div>
<div class="hc" style="left:558px;width:71px">TE XHinge (%)</div>
<div class="hc" style="left:629px;width:70px">TE YHinge (%)</div>
<div class="hc" style="left:699px;width:70px">Show</div>
<div class="hc" style="left:769px;width:71px">Camber line</div>
<div class="hc" style="left:840px;width:182px">Style</div>
</div>
<div class="vh" style="top:11.00px">1</div>
<div class="row" style="top:11.00px">
<div class="c l" style="left:0px;width:128px">AG 27 Bubble Dancer DLG by Ma…</div>
<div class="c r" style="left:128px;width:71px">6.11</div>
<div class="c r" style="left:199px;width:71px">21.60</div>
<div class="c r" style="left:270px;width:70px">2.70</div>
<div class="c r" style="left:340px;width:71px">42.98</div>
<div class="c r" style="left:411px;width:70px">160</div>
<div class="c r" style="left:481px;width:70px">0.00</div>
<div class="c r" style="left:551px;width:71px">0.00</div>
<div class="c r" style="left:622px;width:70px">0.00</div>
<div class="c x" style="left:692px;width:70px"><svg width="70" height="16" style="position:absolute;left:0;top:0"><path d="M31.4,5.1 L36.6,9.9 M36.6,5.1 L31.4,9.9" stroke="#1e1e1e" stroke-width="1.25"/></svg></div>
<div class="c" style="left:762px;width:71px"></div>
<div class="c" style="left:833px;width:182px"><div class="sl" style="background:#d58a4c"></div></div>
</div>
<div class="vh" style="top:27.00px">2</div>
<div class="row" style="top:27.00px">
<div class="c l" style="left:0px;width:128px">CLARK Y</div>
<div class="c r" style="left:128px;width:71px">11.70</div>
<div class="c r" style="left:199px;width:71px">28.58</div>
<div class="c r" style="left:270px;width:70px">3.43</div>
<div class="c r" style="left:340px;width:71px">41.00</div>
<div class="c r" style="left:411px;width:70px">100</div>
<div class="c r" style="left:481px;width:70px">0.00</div>
<div class="c r" style="left:551px;width:71px">0.00</div>
<div class="c r" style="left:622px;width:70px">0.00</div>
<div class="c x" style="left:692px;width:70px"><svg width="70" height="16" style="position:absolute;left:0;top:0"><path d="M31.4,5.1 L36.6,9.9 M36.6,5.1 L31.4,9.9" stroke="#1e1e1e" stroke-width="1.25"/></svg></div>
<div class="c" style="left:762px;width:71px"></div>
<div class="c" style="left:833px;width:182px"><div class="sl" style="background:#3d68e0"></div></div>
</div>
<div class="vh" style="top:43.00px">3</div>
<div class="row sel" style="top:43.00px">
<div class="c l" style="left:0px;width:128px">Eppler E374</div>
<div class="c r" style="left:128px;width:71px">10.91</div>
<div class="c r" style="left:199px;width:71px">35.13</div>
<div class="c r" style="left:270px;width:70px">2.25</div>
<div class="c r" style="left:340px;width:71px">39.02</div>
<div class="c r" style="left:411px;width:70px">61</div>
<div class="c r" style="left:481px;width:70px">0.00</div>
<div class="c r" style="left:551px;width:71px">0.00</div>
<div class="c r" style="left:622px;width:70px">0.00</div>
<div class="c x" style="left:692px;width:70px"><svg width="70" height="16" style="position:absolute;left:0;top:0"><path d="M31.4,5.1 L36.6,9.9 M36.6,5.1 L31.4,9.9" stroke="#1e1e1e" stroke-width="1.25"/></svg></div>
<div class="c" style="left:762px;width:71px"></div>
<div class="c" style="left:833px;width:182px"><div class="sl" style="background:#2e8b57"></div></div>
</div>
<div class="vh" style="top:59.00px">4</div>
<div class="row" style="top:59.00px">
<div class="c l" style="left:0px;width:128px">NACA 0009</div>
<div class="c r" style="left:128px;width:71px">8.99</div>
<div class="c r" style="left:199px;width:71px">29.48</div>
<div class="c r" style="left:270px;width:70px">0.00</div>
<div class="c r" style="left:340px;width:71px">0.01</div>
<div class="c r" style="left:411px;width:70px">99</div>
<div class="c r" style="left:481px;width:70px">0.00</div>
<div class="c r" style="left:551px;width:71px">0.00</div>
<div class="c r" style="left:622px;width:70px">0.00</div>
<div class="c x" style="left:692px;width:70px"><svg width="70" height="16" style="position:absolute;left:0;top:0"><path d="M31.4,5.1 L36.6,9.9 M36.6,5.1 L31.4,9.9" stroke="#1e1e1e" stroke-width="1.25"/></svg></div>
<div class="c" style="left:762px;width:71px"></div>
<div class="c" style="left:833px;width:182px"><div class="sl" style="background:#dc143c"></div></div>
</div>
<div class="vbody"></div>
</div>
<div id="status"><span>003*</span></div>
</div></body></html>
